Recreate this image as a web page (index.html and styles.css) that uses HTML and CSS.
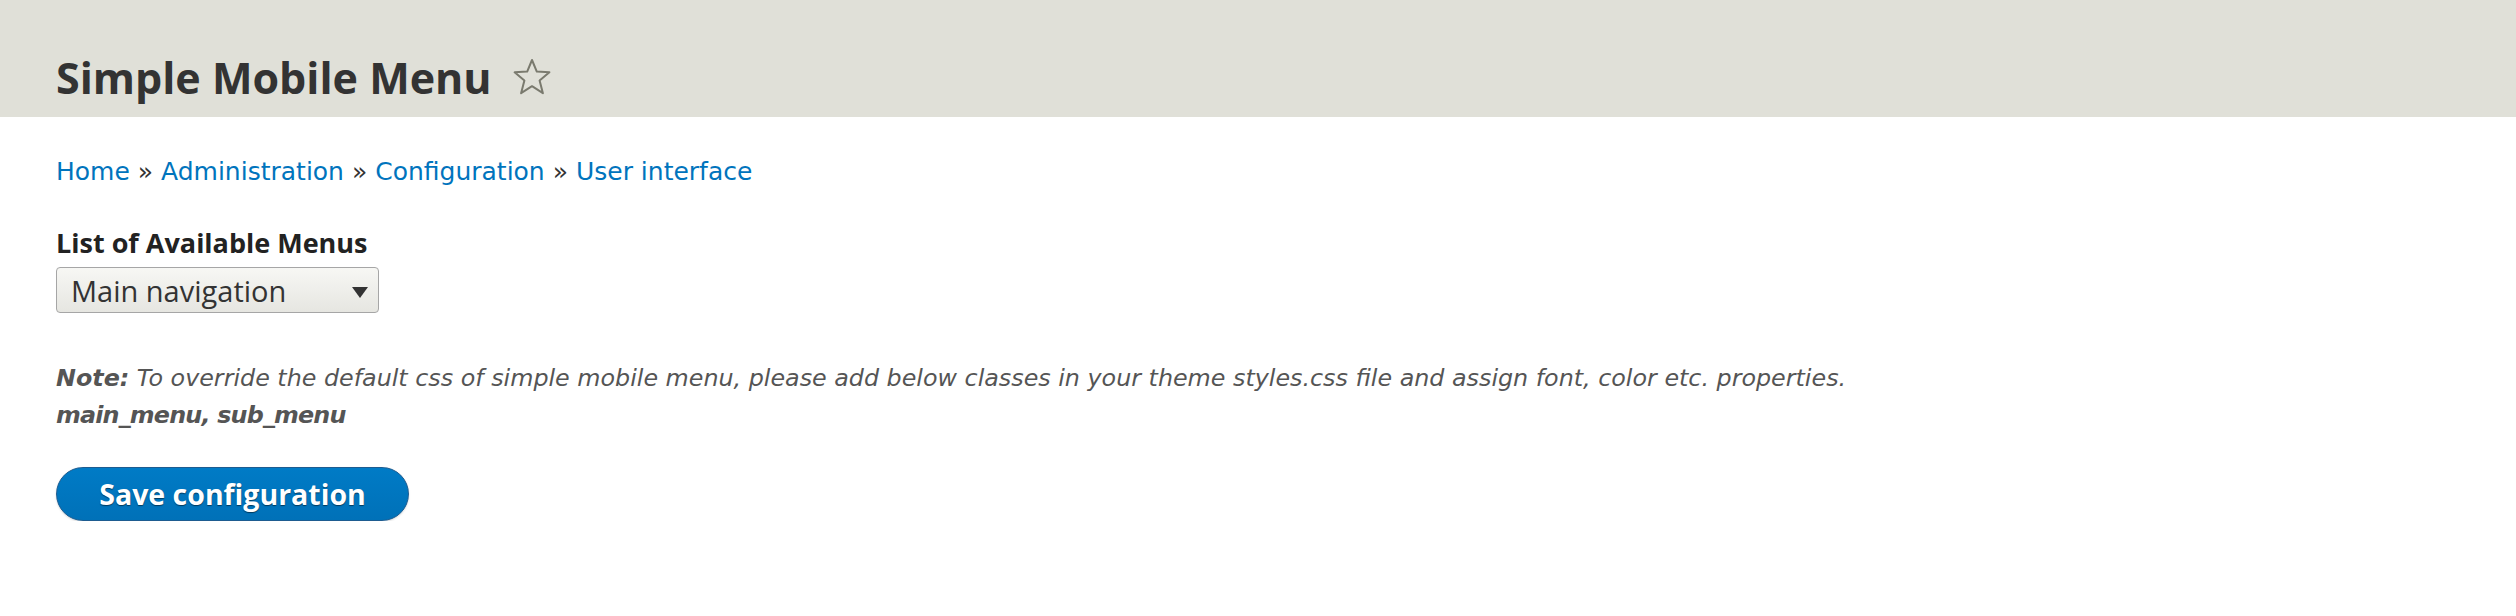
FILE: index.html
```html
<!DOCTYPE html>
<html lang="en">
<head>
    <meta charset="UTF-8">
    <title>Simple Mobile Menu</title>
    <link rel="stylesheet" href="styles.css">
</head>
<body>
    <header class="page-header">
        <h1 class="page-title">Simple Mobile Menu</h1>
        <a class="shortcut" href="#" title="Add to Default shortcuts">
            <svg width="40" height="38" viewBox="0 0 40 38">
                <path d="M20 2 L24.8 13.6 L37.4 14.3 L27.6 22.4 L30.9 35.2 L20 28.2 L9.1 35.2 L12.4 22.4 L2.6 14.3 L15.2 13.6 Z" fill="none" stroke="#7a7a6e" stroke-width="2" stroke-linejoin="round"/>
            </svg>
        </a>
    </header>

    <main class="page-content">
        <nav class="breadcrumb">
            <a href="#">Home</a> &raquo; <a href="#">Administration</a> &raquo; <a href="#">Configuration</a> &raquo; <a href="#">User interface</a>
        </nav>

        <form class="config-form">
            <div class="form-item">
                <label for="menuList">List of Available Menus</label>
                <span class="select-wrap">
                    <select id="menuList">
                        <option value="main">Main navigation</option>
                        <option value="footer">Footer</option>
                        <option value="account">User account menu</option>
                    </select>
                </span>
            </div>

            <div class="description">
                <strong>Note:</strong> To override the default css of simple mobile menu, please add below classes in your theme styles.css file and assign font, color etc. properties.<br>
                <strong class="class-list">main_menu, sub_menu</strong>
            </div>

            <div class="form-actions">
                <button type="submit" class="button-primary">Save configuration</button>
            </div>
        </form>
    </main>
</body>
</html>
```

FILE: styles.css
```css
body { margin: 0; font-family: "Open Sans", "DejaVu Sans", sans-serif; color: #222; background: #fff; }
a { color: #0074bd; text-decoration: none; }

.page-header { display: flex; align-items: flex-start; height: 117px; box-sizing: border-box; padding: 52px 56px 0; background: #e0e0d8; }
.page-title { margin: 0; font-size: 43px; line-height: 52px; font-weight: 700; color: #333; }
.shortcut { display: block; margin: 6px 0 0 20px; }
.shortcut svg { display: block; }

.page-content { padding: 0 56px; }
.breadcrumb { margin-top: 37px; font-family: "DejaVu Sans", sans-serif; font-size: 25px; line-height: 36px; color: #333; }

.form-item { margin-top: 35px; }
.form-item label { display: block; font-size: 27px; line-height: 36px; font-weight: 700; color: #222; }
.select-wrap { position: relative; display: block; width: 323px; margin-top: 6px; }
.select-wrap::after { content: ""; position: absolute; right: 11px; top: 20px; border-left: 8px solid transparent; border-right: 8px solid transparent; border-top: 11px solid #333; pointer-events: none; }
.select-wrap select { display: block; appearance: none; -webkit-appearance: none; width: 323px; height: 46px; box-sizing: border-box; padding: 0 40px 0 14px; font-family: inherit; font-size: 29px; color: #333; border: 1px solid #a6a6a6; border-radius: 4px; background: linear-gradient(#f7f7f4, #e6e6e1); }

.description { margin-top: 47px; font-family: "DejaVu Sans", sans-serif; font-size: 23.8px; line-height: 37px; font-style: italic; color: #555; }
.description strong { font-weight: 700; }
.description .class-list { letter-spacing: -0.8px; }

.form-actions { margin-top: 33px; }
.button-primary { width: 353px; height: 54px; padding: 0; font-family: inherit; font-size: 28.5px; font-weight: 700; color: #fff; text-shadow: 0 1px 1px rgba(0, 0, 0, 0.5); border: 1px solid #1e5c90; border-radius: 27px; background: linear-gradient(#007bc6, #0071b8); box-shadow: 0 1px 2px rgba(0, 0, 0, 0.15); cursor: pointer; }
```
